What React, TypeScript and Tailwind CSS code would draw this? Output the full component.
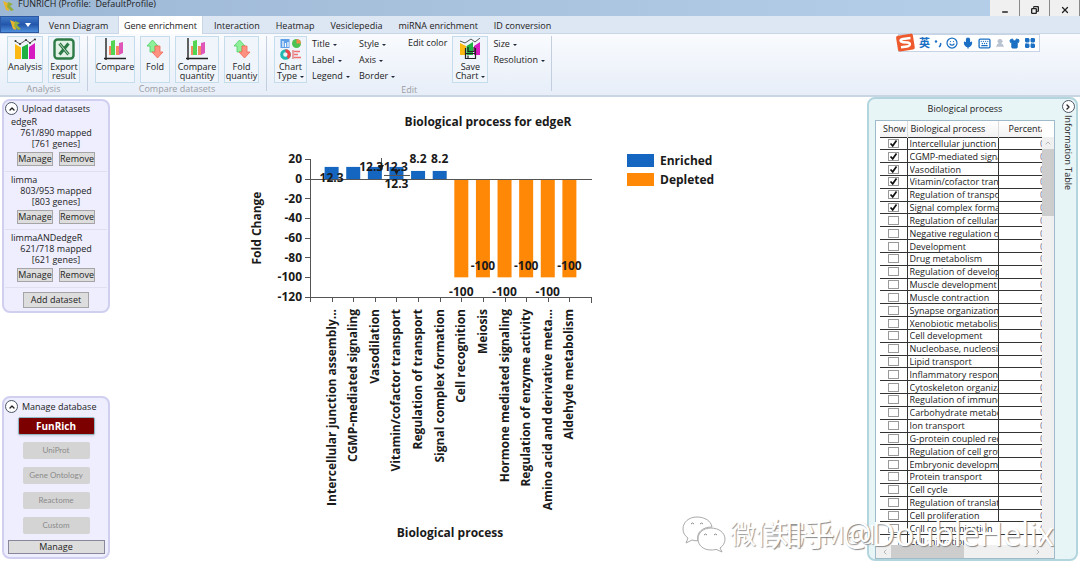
import React from "react";
import { Smile, Mic, Keyboard, Shirt, UserRound, LayoutGrid, ChevronUp, ChevronLeft, ChevronRight, Copy, Minus, X } from "lucide-react";

const TABS = ["Interaction", "Heatmap", "Vesiclepedia", "miRNA enrichment", "ID conversion"];

const DATASETS = [
  { name: "edgeR", mapped: "761/890 mapped", genes: "[761 genes]" },
  { name: "limma", mapped: "803/953 mapped", genes: "[803 genes]" },
  { name: "limmaANDedgeR", mapped: "621/718 mapped", genes: "[621 genes]" },
];

const PROCESSES = [
  "Intercellular junction assembly", "CGMP-mediated signaling", "Vasodilation", "Vitamin/cofactor transport",
  "Regulation of transport", "Signal complex formation", "Regulation of cellular process", "Negative regulation of",
  "Development", "Drug metabolism", "Regulation of development", "Muscle development", "Muscle contraction",
  "Synapse organization", "Xenobiotic metabolism", "Cell development", "Nucleobase, nucleoside", "Lipid transport",
  "Inflammatory response", "Cytoskeleton organization", "Regulation of immune", "Carbohydrate metabolism",
  "Ion transport", "G-protein coupled receptor", "Regulation of cell growth", "Embryonic development",
  "Protein transport", "Cell cycle", "Regulation of translation", "Cell proliferation", "Cell communication", "Cell migration",
];

const BARS = [
  { label: "Intercellular junction assembly...", value: 12.3, dx: 0, y: 182 },
  { label: "CGMP-mediated signaling", value: 12.3, dx: 18, y: 171 },
  { label: "Vasodilation", value: 12.3, dx: 21, y: 171 },
  { label: "Vitamin/cofactor transport", value: 12.3, dx: 0, y: 188 },
  { label: "Regulation of transport", value: 8.2, dx: 0, y: 163 },
  { label: "Signal complex formation", value: 8.2, dx: 0, y: 163 },
  { label: "Cell recognition", value: -100, dx: 0, y: 296 },
  { label: "Meiosis", value: -100, dx: 0, y: 270 },
  { label: "Hormone mediated signaling", value: -100, dx: 0, y: 296 },
  { label: "Regulation of enzyme activity", value: -100, dx: 0, y: 270 },
  { label: "Amino acid and derivative meta...", value: -100, dx: 0, y: 296 },
  { label: "Aldehyde metabolism", value: -100, dx: 0, y: 270 },
];

function BarsIcon() {
  return (
    <svg width="22" height="22" viewBox="0 0 22 22" aria-hidden="true">
      <path d="M1 8v13h6V9.500L1 6z" fill="#fdb913" />
      <path d="M8 9l6-3v15H8z" fill="#1fb141" />
      <path d="M15 9l6-4v16h-6z" fill="#d61bc0" />
      <path d="M1 3l5 3 6-4 4 3 5-4" fill="none" stroke="#555" strokeWidth="1" />
      <g fill="#333"><circle cx="1.500" cy="3" r="1" /><circle cx="6" cy="6" r="1" /><circle cx="12" cy="2" r="1" /><circle cx="16" cy="5" r="1" /><circle cx="21" cy="1.500" r="1" /></g>
    </svg>
  );
}

function SaveIcon() {
  return (
    <svg width="22" height="22" viewBox="0 0 22 22" aria-hidden="true">
      <path d="M1 5l6 3v9H1z" fill="#fdb913" />
      <path d="M7.500 8l6.500-4v13H7.500z" fill="#1fb141" />
      <path d="M15 8l6-4v13h-6z" fill="#d61bc0" />
      <path d="M1 3l5 2 6-4 4 3 5-4" fill="none" stroke="#555" strokeWidth="1" />
      <path d="M6.500 10v10.500h10V10M9 9v4.500h6V9M6.500 15.500h10M9 20.500v-3" fill="none" stroke="#222" strokeWidth="1.200" />
    </svg>
  );
}

function ExcelIcon() {
  return (
    <svg width="22" height="22" viewBox="0 0 22 22" aria-hidden="true">
      <rect x="1.500" y="1.500" width="19" height="19" rx="3" fill="#e3f2e6" stroke="#2c7a45" strokeWidth="2.400" />
      <path d="M6.500 5.500l9 11M15.500 5.500l-9 11" stroke="#2c7a45" strokeWidth="3" />
      <path d="M6.500 5.500l9 11" stroke="#fff" strokeWidth="0.700" />
    </svg>
  );
}

function CompareIcon() {
  return (
    <svg width="22" height="22" viewBox="0 0 22 22" aria-hidden="true">
      <path d="M5 8h3v9H5z" fill="#f58a62" />
      <path d="M7 3l4-1v15H7z" fill="#53d453" />
      <path d="M12 8h3v9h-3z" fill="#f58a62" />
      <path d="M15 5l4-1v11l-4 2z" fill="#e055b8" />
      <path d="M2 0v22M0 20.500h22" stroke="#222" strokeWidth="1.400" />
    </svg>
  );
}

function FoldIcon() {
  return (
    <svg width="18" height="20" viewBox="0 0 18 20" aria-hidden="true">
      <path d="M6.500 1L12 7H9v6H4V7H1z" fill="#8ff09a" stroke="#4fce62" strokeWidth="0.800" />
      <path d="M9 7h5v6h3l-5.500 6L6 13h3z" fill="#ff9180" stroke="#f06a58" strokeWidth="0.800" />
    </svg>
  );
}

function ChartTypeIcon() {
  return (
    <svg width="22" height="22" viewBox="0 0 22 22" aria-hidden="true">
      <rect x="0.500" y="1" width="9" height="9" fill="#5d9fe8" />
      <path d="M3 3v6M5.500 5v4M8 4v5" stroke="#fff" strokeWidth="1.200" />
      <circle cx="16.500" cy="5.500" r="4.500" fill="#4bc253" />
      <path d="M16.500 5.500V1a4.500 4.500 0 0 1 4.500 4.500z" fill="#f58a4b" />
      <circle cx="5.500" cy="16.500" r="3.800" fill="none" stroke="#20b8b0" strokeWidth="3" />
      <path d="M5.500 12.700a3.800 3.800 0 0 1 2 7" fill="none" stroke="#ee4646" strokeWidth="3" />
      <path d="M13 12v9" stroke="#e34b4b" strokeWidth="1" />
      <path d="M14 13.500h6M14 16.500h4M14 19.500h7" stroke="#ee7272" strokeWidth="1.500" />
    </svg>
  );
}

function Caret() {
  return <span className="ml-[3px] inline-block border-x-2 border-t-2 border-x-transparent border-t-gray-800 align-middle" />;
}

function BigButton({ icon, lines, width, caret }: { icon: React.ReactNode; lines: string[]; width: string; caret?: boolean }) {
  return (
    <button className={`flex h-[47px] shrink-0 flex-col items-center border border-[#c5dcec] bg-[#eff5fb] leading-3 whitespace-nowrap ${width}`}>
      <span className="flex h-6 items-center">{icon}</span>
      {lines.map((line, i) => (
        <span key={line} className="h-[9px]">
          {line}
          {caret && i === lines.length - 1 && <Caret />}
        </span>
      ))}
    </button>
  );
}

function Group({ title, children }: { title: string; children: React.ReactNode }) {
  return (
    <section className="flex shrink-0 flex-col border-r border-[#c3cfdf] px-[7px]">
      <div className="flex items-start gap-[5px]">{children}</div>
      <h2 className="text-center leading-3 text-[#9b9da3]">{title}</h2>
    </section>
  );
}

function MenuColumn({ items, className }: { items: string[]; className: string }) {
  return (
    <div className={`flex flex-col items-start ${className}`}>
      {items.map((item) => (
        <button key={item} className="h-4 whitespace-nowrap">
          {item}
          <Caret />
        </button>
      ))}
    </div>
  );
}

function RoundToggle({ label, children }: { label: string; children: React.ReactNode }) {
  return (
    <button aria-label={label} className="flex size-[13px] shrink-0 items-center justify-center rounded-full border border-gray-600 bg-white">
      {children}
    </button>
  );
}

const smallButton = "h-[14px] border border-[#a5a5a8] bg-[#dddddd] leading-3 text-center";

function Chart() {
  const step = 281 / 13;
  const yOf = (v: number) => 179 - (v * 118) / 120;
  return (
    <svg
      width="540" height="460" viewBox="225 97 540 460" role="img" aria-label="Biological process for edgeR"
      className="shrink-0 font-['Open_Sans','Noto_Sans',sans-serif] text-[12px] font-bold"
      fill="#1a1a1a"
    >
      <text x="488" y="126" textAnchor="middle">Biological process for edgeR</text>
      <text x="450" y="537" textAnchor="middle">Biological process</text>
      <text transform="translate(261 228) rotate(-90)" textAnchor="middle">Fold Change</text>
      {BARS.map((b, i) => {
        const x = 310 + step * (i + 1);
        const top = Math.min(yOf(b.value), 179);
        return <rect key={b.label} x={x - 7} y={top} width="14" height={Math.abs(yOf(b.value) - 179)} fill={b.value > 0 ? "#1566c0" : "#ff8806"} />;
      })}
      <g stroke="#555" strokeWidth="1" fill="none" shapeRendering="crispEdges">
        <path d="M310.500 159v143M305 297.500h286.500v5M305 179.500h286.500" />
        {[20, -20, -40, -60, -80, -100].map((v) => <path key={v} d={`M305 ${yOf(v)}h5`} />)}
        {BARS.map((b, i) => <path key={b.label} d={`M${310.5 + step * (i + 1)} 297v5`} />)}
        <path d="M381.500 158v12M384 175.500h26M396.500 168v8" />
      </g>
      <path d="M378 165h6l-3 6zM394 170h5l-2.500 5z" />
      {[20, 0, -20, -40, -60, -80, -100, -120].map((v) => (
        <text key={v} x="302" y={yOf(v) + 4} textAnchor="end">{v}</text>
      ))}
      {BARS.map((b, i) => (
        <text key={b.label} x={310 + step * (i + 1) + b.dx} y={b.y} textAnchor="middle">{b.value}</text>
      ))}
      {BARS.map((b, i) => (
        <text key={b.label} transform={`translate(${310 + step * (i + 1) + 4} 309) rotate(-90)`} textAnchor="end">{b.label}</text>
      ))}
      <rect x="627" y="154" width="27" height="13" fill="#1566c0" />
      <rect x="627" y="173" width="27" height="13" fill="#ff8806" />
      <text x="660" y="165">Enriched</text>
      <text x="660" y="184">Depleted</text>
    </svg>
  );
}

function LogoMark() {
  return (
    <svg width="12" height="14" viewBox="0 0 12 14" aria-hidden="true">
      <path d="M1 2l5 2 1 8-3-1z" fill="#e6b52e" />
      <path d="M6 3l5 2-3 2 4 4-3 1-4-4z" fill="#93ae3f" />
    </svg>
  );
}

export default function App() {
  return (
    <div className="relative flex h-screen flex-col overflow-hidden bg-white font-['Open_Sans','Noto_Sans','Noto_Sans_CJK_SC',sans-serif] text-[9px] text-[#222]">
      <header className="flex h-4 shrink-0 items-start justify-between bg-linear-to-r from-[#9db8d5] to-[#b7d0ea]">
        <div className="flex h-3 items-center gap-1 pl-[2px] leading-3 whitespace-pre">
          <LogoMark />
          <h1 className="h-4">FUNRICH (Profile:  DefaultProfile)</h1>
        </div>
        <div className="flex h-4 w-[90px] bg-[#f0f0f0]">
          <button aria-label="Minimize" className="flex flex-1 items-end justify-center border-r border-[#888]"><Minus size={8} strokeWidth={4} /></button>
          <button aria-label="Restore" className="flex flex-1 items-center justify-center border-r border-[#888] pt-1"><Copy size={8} strokeWidth={4} className="-scale-x-100" /></button>
          <button aria-label="Close" className="flex flex-1 items-center justify-center border-r border-[#888] pt-1"><X size={10} strokeWidth={3} /></button>
        </div>
      </header>

      <nav className="flex h-[18px] shrink-0 items-stretch border-b border-[#c9d6e6] bg-[#dde6f3]">
        <button aria-label="Application menu" className="flex w-[39px] items-center justify-center gap-1 border border-[#2b57a3] bg-linear-to-b from-[#3f79c8] via-[#2456ab] to-[#4f8fdc]">
          <LogoMark />
          <span className="border-x-[3px] border-t-4 border-x-transparent border-t-white" />
        </button>
        <button className="w-[79px] pt-[2px]">Venn Diagram</button>
        <button className="-mb-px w-[85px] border-x border-[#c9d6e6] bg-white pt-px">Gene enrichment</button>
        <div className="flex gap-4 pt-[2px] pl-[11px]">
          {TABS.map((t) => <button key={t}>{t}</button>)}
        </div>
      </nav>

      <div className="flex h-[63px] shrink-0 border-b-2 border-[#c8d6e4] bg-linear-to-b from-[#f9fbfe] to-[#e7eef8] pt-[2px] pb-1">
        <Group title="Analysis">
          <BigButton icon={<BarsIcon />} lines={["Analysis"]} width="w-9" />
          <BigButton icon={<ExcelIcon />} lines={["Export", "result"]} width="w-8" />
        </Group>
        <Group title="Compare datasets">
          <BigButton icon={<CompareIcon />} lines={["Compare"]} width="w-10" />
          <BigButton icon={<FoldIcon />} lines={["Fold"]} width="w-[30px]" />
          <BigButton icon={<CompareIcon />} lines={["Compare", "quantity"]} width="w-11" />
          <BigButton icon={<FoldIcon />} lines={["Fold", "quantiy"]} width="w-[35px]" />
        </Group>
        <Group title="Edit">
          <BigButton icon={<ChartTypeIcon />} lines={["Chart", "Type"]} width="w-[33px]" caret />
          <MenuColumn items={["Title", "Label", "Legend"]} className="w-[42px]" />
          <MenuColumn items={["Style", "Axis", "Border"]} className="w-11" />
          <button className="h-3 whitespace-nowrap">Edit color</button>
          <BigButton icon={<SaveIcon />} lines={["Save", "Chart"]} width="w-9" caret />
          <MenuColumn items={["Size", "Resolution"]} className="w-[51px]" />
        </Group>
      </div>

      <main className="flex min-h-0 flex-1">
        <aside className="flex w-[112px] shrink-0 flex-col justify-between pt-[2px] pb-5 pl-[2px]">
          <section className="flex h-[214px] w-[108px] flex-col rounded-lg border-2 border-[#d0cff0] bg-[#eeeefe] px-px pt-px">
            <div className="mb-px flex items-center gap-1">
              <RoundToggle label="Collapse upload datasets"><ChevronUp size={8} strokeWidth={4} /></RoundToggle>
              <h2>Upload datasets</h2>
            </div>
            {DATASETS.map((d) => (
              <fieldset key={d.name} className="mb-[3px] h-[55px] border-b border-[#e0dff0] px-[6px] pt-px leading-[11px]">
                <legend className="h-[9px] leading-[9px]">{d.name}</legend>
                <p className="text-center">{d.mapped}</p>
                <p className="text-center">{d.genes}</p>
                <div className="flex gap-[6px] pt-[3px] pl-[6px]">
                  <button className={`w-9 ${smallButton}`}>Manage</button>
                  <button className={`w-9 ${smallButton}`}>Remove</button>
                </div>
              </fieldset>
            ))}
            <button className="mx-auto mt-px h-4 w-[66px] border border-[#a5a5a8] bg-[#dddddd] leading-3">Add dataset</button>
          </section>

          <section className="flex h-[163px] w-[108px] flex-col items-center rounded-lg border-2 border-[#d0cff0] bg-[#eeeefe] px-px pt-[2px]">
            <div className="flex items-center gap-1 self-stretch">
              <RoundToggle label="Collapse manage database"><ChevronUp size={8} strokeWidth={4} /></RoundToggle>
              <h2>Manage database</h2>
            </div>
            <button className="mt-[3px] h-[18px] w-[77px] rounded-xs border border-[#8db8c4] bg-[#7d0000] text-[10px] leading-4 font-bold text-white shadow-sm">FunRich</button>
            <div className="flex flex-col gap-2 pt-[7px] font-['Lato','Open_Sans',sans-serif] text-[8px] text-[#8b8b8b]">
              {["UniProt", "Gene Ontology", "Reactome", "Custom"].map((n) => (
                <button key={n} className="h-[17px] w-[67px] rounded-xs bg-[#d4d4d4]">{n}</button>
              ))}
            </div>
            <button className="mt-[6px] h-[14px] w-[97px] border border-[#88889a] bg-[#dddddd] leading-3">Manage</button>
          </section>
        </aside>

        <div className="flex min-w-0 flex-1 justify-start overflow-hidden pl-[113px]">
          <Chart />
        </div>

        <aside className="mr-[2px] mb-[18px] flex w-[211px] shrink-0 rounded-lg border-2 border-[#b2d5de] bg-[#e8f5f7] pl-[6px]">
          <div className="flex w-[180px] flex-col">
            <h2 className="h-[21px] text-center leading-[20px]">Biological process</h2>
            <div className="flex min-h-0 flex-1 flex-col border border-[#9fbac8] bg-white">
              <div className="flex min-h-0 flex-1 overflow-hidden">
                <div className="min-w-0 flex-1 pl-[4px]">
                  <table className="h-[calc(100%+3px)] w-full table-fixed border-collapse">
                    <thead>
                      <tr className="h-[16px] bg-linear-to-b from-white to-[#f2f2f4] leading-3">
                        <th className="w-[27px] overflow-hidden border-r border-[#dcdcdc] p-0 pl-[3px] text-left font-normal">Show</th>
                        <th className="w-[91px] border-r border-[#dcdcdc] p-0 pl-[3px] text-left font-normal">Biological process</th>
                        <th className="overflow-hidden p-0 pl-[10px] text-left font-normal">Percenta</th>
                      </tr>
                    </thead>
                    <tbody>
                      {PROCESSES.map((p, i) => (
                        <tr key={p} className="leading-[11px]">
                          <td className="border-y border-r border-[#333] p-0">
                            <label className="relative mx-auto block h-[9px] w-[11px]">
                              <input type="checkbox" defaultChecked={i < 6} aria-label={`Show ${p}`} className="peer block h-[9px] w-[11px] appearance-none border border-[#999] bg-white" />
                              <svg viewBox="0 0 11 9" className="pointer-events-none absolute inset-0 hidden h-[9px] w-[11px] peer-checked:block" aria-hidden="true">
                                <path d="M2.500 4.500l2.200 2.300L8.500 1.500" fill="none" stroke="#111" strokeWidth="1.700" />
                              </svg>
                            </label>
                          </td>
                          <td className="border border-[#333] p-0 pl-[2px]">
                            <div className="h-[11px] overflow-hidden whitespace-nowrap">{p}</div>
                          </td>
                          <td className="border-y border-l border-[#333] p-0">
                            <div className="ml-auto h-[11px] w-[2px] overflow-hidden text-[#668]">0</div>
                          </td>
                        </tr>
                      ))}
                    </tbody>
                  </table>
                </div>
                <div className="mt-4 flex w-3 shrink-0 flex-col items-center bg-[#f0f0f0] text-[#999]">
                  <ChevronUp size={8} className="my-[2px] shrink-0" />
                  <div className="h-[67px] w-full shrink-0 bg-[#cdcdcd]" />
                </div>
              </div>
              <div className="flex h-[13px] shrink-0 items-center bg-[#f0f0f0] pr-3 pl-[5px] text-[#999]">
                <ChevronLeft size={8} className="mr-[2px]" />
                <div className="h-full w-[73px] bg-[#cdcdcd]" />
                <ChevronRight size={8} className="ml-auto" />
              </div>
            </div>
          </div>
          <div className="flex flex-1 flex-col items-center gap-[2px] pt-px pl-[5px]">
            <RoundToggle label="Collapse information table"><ChevronRight size={8} strokeWidth={4} /></RoundToggle>
            <h2 className="whitespace-nowrap [writing-mode:vertical-rl]">Information Table</h2>
          </div>
        </aside>
      </main>

      <div className="absolute top-[34px] right-10 flex h-[18px] w-[142px] items-center justify-between border border-[#c5d3e4] bg-white pr-[3px] pl-[20px] text-[#1b70c4]">
        <svg width="22" height="20" viewBox="0 0 22 20" className="absolute -top-[2px] -left-[4px]" aria-hidden="true">
          <rect x="2" y="1.500" width="17" height="16" rx="2" transform="rotate(-9 11 10)" fill="#ee5a2d" />
          <path d="M15.500 5L8 6C4.500 6.500 5 9 8 9.200l4.500.300c3.500.3 3 3.500-.500 4L6 14.300" fill="none" stroke="#fff" strokeWidth="2.400" />
        </svg>
        <span className="text-[11px] leading-3 font-bold">英</span>
        <svg width="8" height="10" viewBox="0 0 8 10" aria-hidden="true"><circle cx="2" cy="3.500" r="1.200" fill="currentColor" /><path d="M6.500 5q.7 2.500-1.500 4" fill="none" stroke="currentColor" strokeWidth="1.500" /></svg>
        <Smile size={12} strokeWidth={2.5} />
        <Mic size={12} fill="currentColor" strokeWidth={2.5} />
        <Keyboard size={13} strokeWidth={2.5} />
        <UserRound size={10} fill="currentColor" className="text-[#b9c2d0]" />
        <Shirt size={11} fill="currentColor" />
        <LayoutGrid size={12} fill="currentColor" />
      </div>

      <div className="pointer-events-none absolute right-[26px] bottom-[25px] flex h-10 w-[372px] items-center gap-1 text-white">
        <svg width="44" height="38" viewBox="0 0 44 38" fill="#fff" stroke="#aaa" strokeWidth="1" aria-hidden="true">
          <path d="M15 2C7 2 1 7 1 14c0 4 2 7 5 9l-2 5 6-3c2 .700 4 .900 6 .700C14 18 20 12 30 12 29 6 23 2 15 2z" />
          <path d="M29 13c-8 0-13 5-13 11s5 11 13 11c2 0 4-.300 5-.700l6 2.700-2-4c3-2 5-5 5-9 0-6-6-11-14-11z" />
          <path d="M9 9q1.500-2 3 0M18 9q1.500-2 3 0M22 20q1.500-2 3 0M32 20q1.500-2 3 0" fill="none" stroke="#888" />
        </svg>
        <span className="text-[26px] leading-8 whitespace-nowrap [text-shadow:1px_1px_1px_#999]">微信号: Med</span>
        <span className="absolute top-1 right-0 text-[32px] leading-8 whitespace-nowrap [text-shadow:1px_1px_1px_#888]">知乎 @DoubleHelix</span>
      </div>
    </div>
  );
}
